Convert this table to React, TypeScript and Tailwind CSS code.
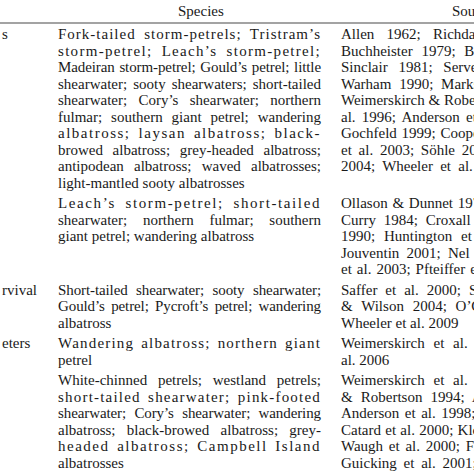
import React from 'react';

// one typeset line: justified lines carry their own tracking, last lines stay ragged
type Ln = { t: string; c?: string; last?: boolean };

interface Row {
  label: string;
  species: Ln[];
  sources: Ln[];
}

const rows: Row[] = [
  {
    label: 's',
    species: [
      { t: 'Fork-tailed storm-petrels; Tristram’s', c: 'tracking-[1px]' },
      { t: 'storm-petrel; Leach’s storm-petrel;', c: 'tracking-[1.3px]' },
      { t: 'Madeiran storm-petrel; Gould’s petrel; little', c: 'tracking-[-0.1px] [word-spacing:-1px]' },
      { t: 'shearwater; sooty shearwaters; short-tailed' },
      { t: 'shearwater; Cory’s shearwater; northern' },
      { t: 'fulmar; southern giant petrel; wandering' },
      { t: 'albatross; laysan albatross; black-', c: 'tracking-[1.5px]' },
      { t: 'browed albatross; grey-headed albatross;' },
      { t: 'antipodean albatross; waved albatrosses;' },
      { t: 'light-mantled sooty albatrosses', last: true },
    ],
    sources: [
      { t: 'Allen 1962; Richdale 1963;', c: '[word-spacing:8.5px]' },
      { t: 'Buchheister 1979; Boersma 1982;', c: '[word-spacing:5px]' },
      { t: 'Sinclair 1981; Serventy et al.', c: '[word-spacing:7px]' },
      { t: 'Warham 1990; Marks 1996;', c: '[word-spacing:4px]' },
      { t: 'Weimerskirch & Robertson' },
      { t: 'al. 1996; Anderson et al.', c: '[word-spacing:2.5px]' },
      { t: 'Gochfeld 1999; Cooper', c: '[word-spacing:1px]' },
      { t: 'et al. 2003; Söhle 2003;', c: '[word-spacing:3px]' },
      { t: '2004; Wheeler et al. 2009', c: '[word-spacing:3.5px]' },
    ],
  },
  {
    label: '',
    species: [
      { t: 'Leach’s storm-petrel; short-tailed', c: 'tracking-[1.6px]' },
      { t: 'shearwater; northern fulmar; southern' },
      { t: 'giant petrel; wandering albatross', last: true },
    ],
    sources: [
      { t: 'Ollason & Dunnet 1978;', c: '[word-spacing:1px]' },
      { t: 'Curry 1984; Croxall et al.', c: '[word-spacing:4px]' },
      { t: '1990; Huntington et al.', c: '[word-spacing:5px]' },
      { t: 'Jouventin 2001; Nel et al.', c: '[word-spacing:3.5px]' },
      { t: 'et al. 2003; Pfteiffer et al.', c: '[word-spacing:1.25px]' },
    ],
  },
  {
    label: 'rvival',
    species: [
      { t: 'Short-tailed shearwater; sooty shearwater;', c: 'tracking-[-0.1px]' },
      { t: 'Gould’s petrel; Pycroft’s petrel; wandering', c: 'tracking-[-0.1px]' },
      { t: 'albatross', last: true },
    ],
    sources: [
      { t: 'Saffer et al. 2000; Söhle', c: '[word-spacing:4.25px]' },
      { t: '& Wilson 2004; O’Connor', c: '[word-spacing:5px]' },
      { t: 'Wheeler et al. 2009' },
    ],
  },
  {
    label: 'eters',
    species: [
      { t: 'Wandering albatross; northern giant', c: 'tracking-[1.2px]' },
      { t: 'petrel', last: true },
    ],
    sources: [
      { t: 'Weimerskirch et al. 1997;', c: '[word-spacing:5px]' },
      { t: 'al. 2006' },
    ],
  },
  {
    label: '',
    species: [
      { t: 'White-chinned petrels; westland petrels;' },
      { t: 'short-tailed shearwater; pink-footed', c: 'tracking-[1.2px]' },
      { t: 'shearwater; Cory’s shearwater; wandering', c: 'tracking-[-0.1px]' },
      { t: 'albatross; black-browed albatross; grey-' },
      { t: 'headed albatross; Campbell Island', c: 'tracking-[1.5px]' },
      { t: 'albatrosses', last: true },
    ],
    sources: [
      { t: 'Weimerskirch et al. 1987;', c: '[word-spacing:5px]' },
      { t: '& Robertson 1994; Arnold', c: '[word-spacing:4.3px]' },
      { t: 'Anderson et al. 1998;', c: '[word-spacing:1.75px]' },
      { t: 'Catard et al. 2000; Klomp', c: '[word-spacing:0.5px]' },
      { t: 'Waugh et al. 2000; Fisher', c: '[word-spacing:2px]' },
      { t: 'Guicking et al. 2001;', c: '[word-spacing:3px]' },
    ],
  },
];

const SpeciesLine = ({ line }: { line: Ln }) => (
  <div
    className={
      line.last
        ? 'text-left whitespace-nowrap'
        : `text-justify [text-align-last:justify] ${line.c ?? ''}`
    }
  >
    {line.t}
  </div>
);

const SourceLine = ({ line }: { line: Ln }) => (
  <div className={`whitespace-nowrap ${line.c ?? ''}`}>{line.t}</div>
);

export default function App() {
  return (
    <div className="w-[474px] h-[474px] overflow-hidden bg-white font-['Liberation_Serif',serif] text-[15px] leading-[16.5px] text-[#1a1a1a]">
      {/* header */}
      <div className="grid grid-cols-[58px_263px_279px] h-[22px] items-center">
        <div />
        <div className="pl-[120px] whitespace-nowrap">Species</div>
        <div className="pl-[131px] whitespace-nowrap">Sources</div>
      </div>
      <div className="h-[2px] w-full bg-[#a3a3a3]" />

      {/* body */}
      <div className="flex flex-col">
        {rows.map((row, i) => (
          <div key={i} className="grid grid-cols-[58px_263px_279px] py-[2px]">
            <div className="whitespace-nowrap pl-[2px]">{row.label}</div>
            <div>
              {row.species.map((l, j) => (
                <SpeciesLine key={j} line={l} />
              ))}
            </div>
            <div className="pl-5 overflow-hidden">
              {row.sources.map((l, j) => (
                <SourceLine key={j} line={l} />
              ))}
            </div>
          </div>
        ))}
      </div>
    </div>
  );
}
